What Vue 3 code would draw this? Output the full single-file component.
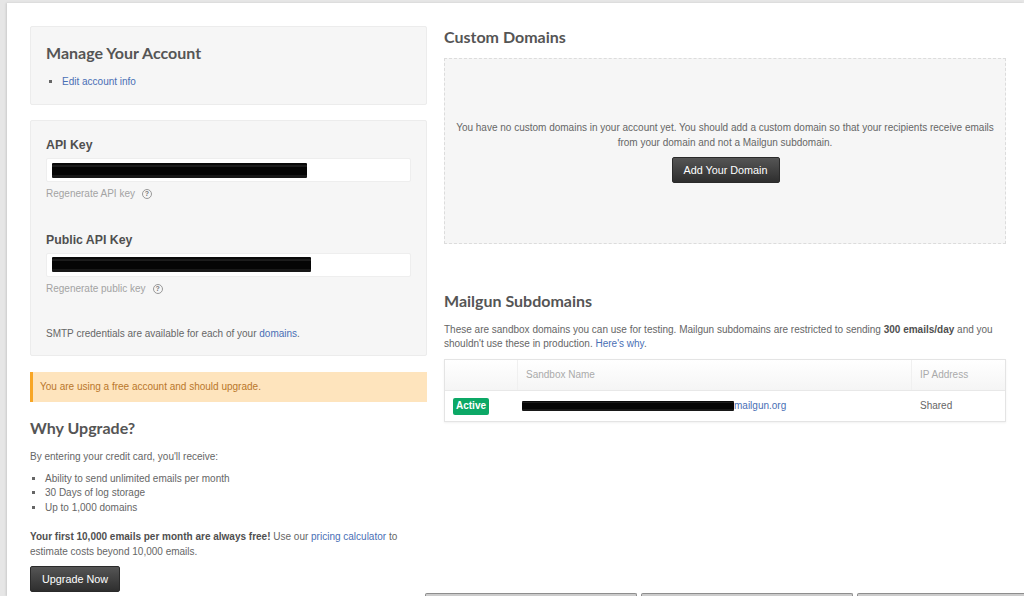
<script setup>
const perks = ['Ability to send unlimited emails per month', '30 Days of log storage', 'Up to 1,000 domains']
</script>

<template>
  <div class="page">
    <main class="sheet">
      <section class="col left">
        <div class="well manage">
          <h2 class="h-lg">Manage Your Account</h2>
          <ul class="list acct"><li><a>Edit account info</a></li></ul>
        </div>

        <div class="well keys">
          <h3>API Key</h3>
          <div class="field"><span class="scribble s1"></span></div>
          <p class="regen">Regenerate API key <span class="q">?</span></p>
          <h3 class="second">Public API Key</h3>
          <div class="field"><span class="scribble s2"></span></div>
          <p class="regen">Regenerate public key <span class="q">?</span></p>
          <p class="smtp">SMTP credentials are available for each of your <a>domains</a>.</p>
        </div>

        <div class="alert">You are using a free account and should upgrade.</div>

        <h2 class="h-lg why">Why Upgrade?</h2>
        <p class="intro">By entering your credit card, you'll receive:</p>
        <ul class="list perks"><li v-for="p in perks" :key="p">{{ p }}</li></ul>
        <p class="free"><b>Your first 10,000 emails per month are always free!</b> Use our <a>pricing calculator</a> to estimate costs beyond 10,000 emails.</p>
        <button class="btn upgrade">Upgrade Now</button>
      </section>

      <section class="col right">
        <h2 class="h-lg custom">Custom Domains</h2>
        <div class="empty">
          <p>You have no custom domains in your account yet. You should add a custom domain so that your recipients receive emails<br>from your domain and not a Mailgun subdomain.</p>
          <button class="btn add">Add Your Domain</button>
        </div>

        <h2 class="h-lg sub">Mailgun Subdomains</h2>
        <p class="desc">These are sandbox domains you can use for testing. Mailgun subdomains are restricted to sending <b>300 emails/day</b> and you shouldn't use these in production. <a>Here's why</a>.</p>
        <div class="table">
          <div class="thead">
            <div class="c1"></div>
            <div class="c2">Sandbox Name</div>
            <div class="c3">IP Address</div>
          </div>
          <div class="tbody">
            <div class="c1"><span class="badge">Active</span></div>
            <div class="c2 name"><span class="scribble s3"></span><a>mailgun.org</a></div>
            <div class="c3 shared">Shared</div>
          </div>
        </div>
      </section>
    </main>
    <div class="tabs" aria-hidden="true"><i></i><i></i><i></i></div>
  </div>
</template>

<style>
html, body { margin: 0; background: #e6e6e6; }
</style>

<style scoped>
.page {
  position: relative;
  height: 596px;
  overflow: hidden;
  box-sizing: border-box;
  padding: 3px 0 0 7px;
  background: #e6e6e6;
  font: 10px/14.5px "Liberation Sans", Arial, sans-serif;
  color: #666;
}
.sheet {
  display: flex;
  height: 593px;
  box-sizing: border-box;
  padding-left: 23px;
  background: #fff;
  box-shadow: -1px 0 2px rgba(0,0,0,.12);
}
.col { display: flex; flex-direction: column; align-items: flex-start; }
.left { width: 397px; margin-right: 17px; padding-top: 23px; }
.right { width: 562px; }
a { color: #4a6fb5; }
h2, h3, p, ul { margin: 0; padding: 0; }
.h-lg {
  font: 700 16px/22px Lato, "Open Sans", sans-serif;
  color: #555;
}
.well {
  box-sizing: border-box;
  width: 100%;
  background: #f6f6f6;
  border: 1px solid #ececec;
  border-radius: 2px;
  padding: 0 15px;
}
.manage { height: 79px; padding-top: 15px; }
.list { list-style: square; }
.acct { margin-top: 11px; padding-left: 16px; }
.keys { height: 236px; margin-top: 15px; padding-top: 16px; }
h3 {
  font: 700 12.3px/16px "Liberation Sans", Arial, sans-serif;
  color: #4f4f4f;
}
.second { margin-top: 30px; }
.field {
  display: flex;
  align-items: center;
  box-sizing: border-box;
  height: 24px;
  margin-top: 5px;
  padding-left: 5px;
  background: #fff;
  border: 1px solid #eee;
  border-radius: 2px;
}
.regen { margin-top: 5px; color: #a3a3a3; display: flex; align-items: center; }
.q {
  box-sizing: border-box;
  width: 10px;
  height: 10px;
  margin-left: 7px;
  border: 1px solid #999;
  border-radius: 50%;
  font: 700 7px/8px "Liberation Sans", sans-serif;
  text-align: center;
  color: #777;
}
.smtp { margin-top: 31px; }
.scribble {
  display: block;
  height: 15px;
  background: linear-gradient(#0a0a0a 0 15%, #1c1c1c 15% 25%, #050505 25% 80%, #181818 80%);
  border-radius: 1px;
}
.s1 { width: 255px; }
.s2 { width: 259px; }
.s3 { height: 10px; flex: none; margin-right: 0; width: 212px; }
.alert {
  box-sizing: border-box;
  width: 100%;
  height: 30px;
  margin-top: 16px;
  padding: 8px 0 0 7px;
  background: #fee4bd;
  border-left: 3px solid #f8a625;
  color: #b9772b;
}
.why { margin-top: 15px; }
.intro { margin-top: 11px; }
.perks { margin-top: 7px; padding-left: 15px; }
.free { margin-top: 15px; }
b { color: #4f4f4f; }
.btn {
  box-sizing: border-box;
  height: 26px;
  border: 1px solid #2a2a2a;
  border-radius: 2px;
  background: linear-gradient(#555, #2e2e2e);
  color: #fff;
  font: 10.8px/14px "Liberation Sans", Arial, sans-serif;
  padding: 0;
}
.upgrade { width: 90px; margin-top: 7px; }
.custom { margin-top: 23px; }
.empty {
  box-sizing: border-box;
  display: flex;
  flex-direction: column;
  align-items: center;
  width: 100%;
  height: 186px;
  margin-top: 10px;
  padding-top: 62px;
  background: #f6f6f6;
  border: 1px dashed #dcdcdc;
  text-align: center;
}
.add { width: 108px; margin: 7px 0 0 1px; }
.sub { margin-top: 46px; }
.desc { margin-top: 11px; line-height: 14px; }
.table {
  width: 100%;
  margin-top: 8px;
  border: 1px solid #e4e4e4;
  box-sizing: border-box;
  box-shadow: 0 1px 2px rgba(0,0,0,.06);
}
.thead, .tbody { display: grid; grid-template-columns: 72px 1fr 94px; }
.thead {
  height: 31px;
  background: linear-gradient(#fff, #f5f5f5);
  border-bottom: 1px solid #e8e8e8;
  color: #aaa;
  line-height: 30px;
  box-sizing: border-box;
}
.thead .c2, .thead .c3 { border-left: 1px solid #f0f0f0; padding-left: 8px; }
.tbody { height: 30px; align-items: center; }
.tbody .c1 { padding-left: 8px; }
.badge {
  display: inline-block;
  width: 36px;
  height: 17px;
  background: #0ca866;
  border-radius: 2px;
  color: #fff;
  font-weight: 700;
  line-height: 16px;
  text-align: center;
}
.name { display: flex; align-items: center; padding-left: 5px; }
.shared { padding-left: 9px; }
.tabs {
  position: absolute;
  left: 425px;
  right: 0;
  bottom: 0;
  display: flex;
  gap: 4px;
}
.tabs i {
  display: block;
  flex: none;
  width: 212px;
  height: 3px;
  box-sizing: border-box;
  border: 1px solid #8e8e8e;
  border-bottom: 0;
  border-radius: 2px 2px 0 0;
  background: #ccc;
}
</style>
